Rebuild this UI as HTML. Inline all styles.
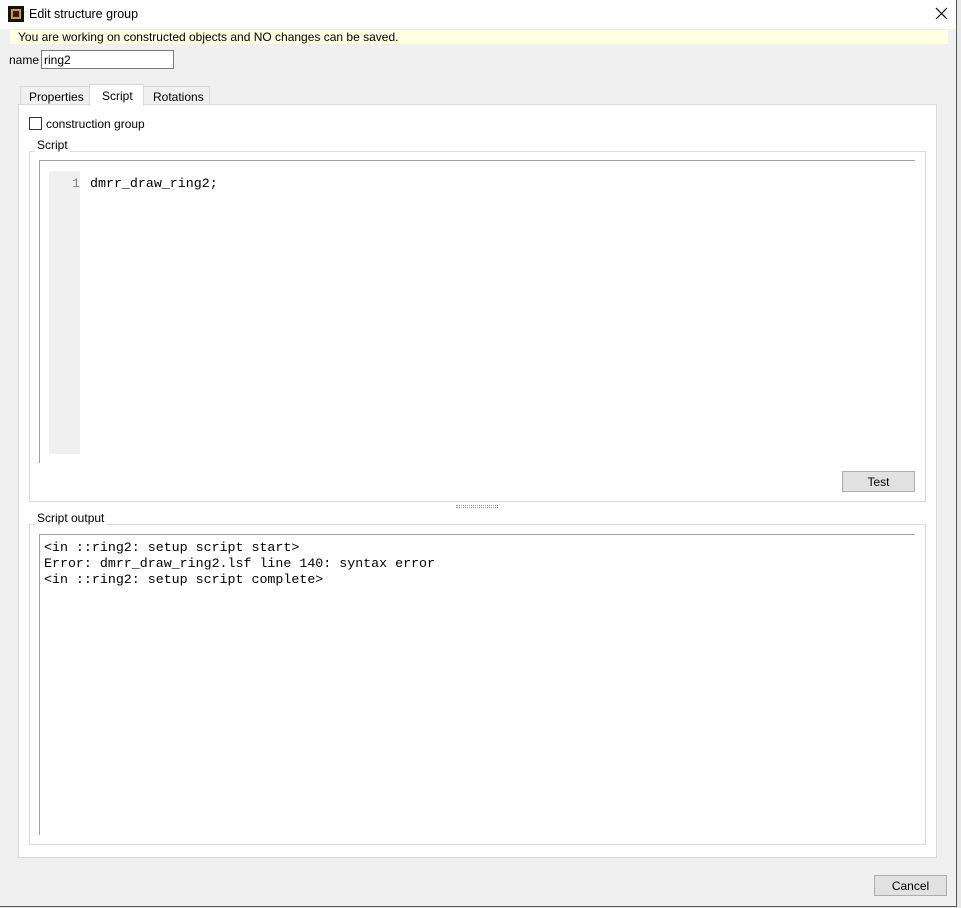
<!DOCTYPE html>
<html><head><style>
*{margin:0;padding:0;box-sizing:border-box}
body{width:961px;height:908px;background:#e8e8e8;position:relative;overflow:hidden;font-family:"Liberation Sans",sans-serif;font-size:12px;color:#000}
.a{position:absolute}
.mono{font-family:"Liberation Mono",monospace;font-size:13.3px}
</style></head><body>
<div class="a" style="left:0;top:0;width:957px;height:907px;background:#f0f0f0;border-right:1px solid #555;border-bottom:1px solid #555"></div>
<div class="a" style="left:0;top:0;width:956px;height:29px;background:#fff"></div>
<div class="a" style="left:8px;top:6px;width:16px;height:16px;background:#111"></div>
<div class="a" style="left:11px;top:9px;width:10px;height:10px;background:#2a1d05;border:2px solid #d49a22"></div>
<div class="a" style="left:29px;top:7px;font-size:12.5px">Edit structure group</div>
<svg class="a" style="left:935px;top:7px" width="13" height="13"><path d="M1 1L12 12M12 1L1 12" stroke="#000" stroke-width="1.2"/></svg>
<div class="a" style="left:10px;top:30px;width:938px;height:14px;background:#ffffe1"></div>
<div class="a" style="left:18px;top:30px">You are working on constructed objects and NO changes can be saved.</div>
<div class="a" style="left:9px;top:53px">name</div>
<div class="a" style="left:41px;top:50px;width:133px;height:19px;background:#fff;border:1px solid #7a7a7a;padding:2px 0 0 2px">ring2</div>
<div class="a" style="left:18px;top:104px;width:919px;height:754px;background:#fff;border:1px solid #d9d9d9"></div>
<div class="a" style="left:20px;top:86px;width:70px;height:19px;background:#f0f0f0;border:1px solid #d9d9d9;padding:3px 0 0 8px">Properties</div>
<div class="a" style="left:143px;top:86px;width:67px;height:19px;background:#f0f0f0;border:1px solid #d9d9d9;padding:3px 0 0 9px">Rotations</div>
<div class="a" style="left:89px;top:84px;width:55px;height:22px;background:#fff;border:1px solid #d9d9d9;border-bottom:none;padding:4px 0 0 12px">Script</div>
<div class="a" style="left:29px;top:117px;width:13px;height:13px;border:1px solid #333;background:#fff"></div>
<div class="a" style="left:46px;top:117px">construction group</div>
<div class="a" style="left:29px;top:151px;width:897px;height:351px;border:1px solid #dcdcdc"></div>
<div class="a" style="left:35px;top:138px;background:#fff;padding:0 2px">Script</div>
<div class="a" style="left:39px;top:160px;width:876px;height:303px;border-top:1px solid #a0a0a0;border-left:1px solid #a0a0a0"></div>
<div class="a" style="left:49px;top:171px;width:31px;height:283px;background:#f0f0f0"></div>
<div class="a mono" style="left:72px;top:176px;color:#888">1</div>
<div class="a mono" style="left:90px;top:176px">dmrr_draw_ring2;</div>
<div class="a" style="left:842px;top:471px;width:73px;height:21px;background:#e1e1e1;border:1px solid #adadad;text-align:center;padding-top:3px">Test</div>
<div class="a" style="left:456px;top:505px;width:42px;height:3px;border-top:1px dotted #999;border-bottom:1px dotted #999"></div>
<div class="a" style="left:29px;top:524px;width:897px;height:321px;border:1px solid #dcdcdc"></div>
<div class="a" style="left:35px;top:511px;background:#fff;padding:0 2px">Script output</div>
<div class="a" style="left:39px;top:534px;width:876px;height:301px;border-top:1px solid #a0a0a0;border-left:1px solid #a0a0a0"></div>
<div class="a mono" style="left:44px;top:540px;line-height:16px;white-space:pre">&lt;in ::ring2: setup script start&gt;
Error: dmrr_draw_ring2.lsf line 140: syntax error
&lt;in ::ring2: setup script complete&gt;</div>
<div class="a" style="left:874px;top:875px;width:73px;height:21px;background:#e1e1e1;border:1px solid #adadad;text-align:center;padding-top:3px">Cancel</div>
</body></html>
